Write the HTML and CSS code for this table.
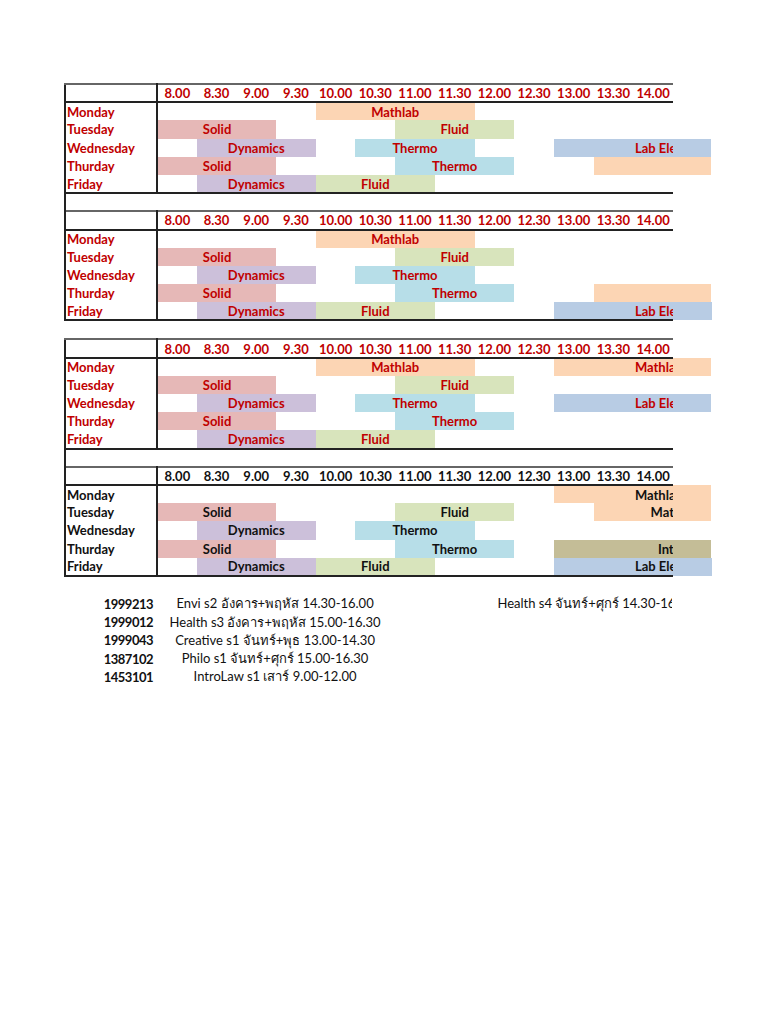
FILE: index.html
```html
<!DOCTYPE html>
<html lang="th">
<head>
    <meta charset="UTF-8">
    <meta name="viewport" content="width=device-width, initial-scale=1.0">
    <title>Timetable</title>
    <link rel="stylesheet" href="styles.css">
</head>
<body>
    <div class="sheet">
        <table class="tt">
            <colgroup><col class="c-day"><col span="13" class="c-t"><col class="c-x"></colgroup>
            <tbody class="red">
                <tr class="head"><th class="day"></th><th>8.00</th><th>8.30</th><th>9.00</th><th>9.30</th><th>10.00</th><th>10.30</th><th>11.00</th><th>11.30</th><th>12.00</th><th>12.30</th><th>13.00</th><th>13.30</th><th>14.00</th><td class="x"></td></tr>
                <tr><td class="day">Monday</td><td colspan="4"></td><td colspan="4" class="pe">Mathlab</td><td colspan="5"></td><td class="x"></td></tr>
                <tr><td class="day">Tuesday</td><td colspan="3" class="so">Solid</td><td colspan="3"></td><td colspan="3" class="fl">Fluid</td><td colspan="4"></td><td class="x"></td></tr>
                <tr><td class="day">Wednesday</td><td></td><td colspan="3" class="dy">Dynamics</td><td></td><td colspan="3" class="th">Thermo</td><td colspan="2"></td><td colspan="3" class="le cut">Lab Electronics</td><td class="x le"></td></tr>
                <tr><td class="day">Thurday</td><td colspan="3" class="so">Solid</td><td colspan="3"></td><td colspan="3" class="th">Thermo</td><td colspan="2"></td><td colspan="2" class="pe"></td><td class="x pe"></td></tr>
                <tr class="last"><td class="day">Friday</td><td></td><td colspan="3" class="dy">Dynamics</td><td colspan="3" class="fl">Fluid</td><td colspan="6"></td><td class="x"></td></tr>
                <tr class="blank"><td class="day"></td><td colspan="13"></td><td class="x"></td></tr>
                <tr class="head"><th class="day"></th><th>8.00</th><th>8.30</th><th>9.00</th><th>9.30</th><th>10.00</th><th>10.30</th><th>11.00</th><th>11.30</th><th>12.00</th><th>12.30</th><th>13.00</th><th>13.30</th><th>14.00</th><td class="x"></td></tr>
                <tr><td class="day">Monday</td><td colspan="4"></td><td colspan="4" class="pe">Mathlab</td><td colspan="5"></td><td class="x"></td></tr>
                <tr><td class="day">Tuesday</td><td colspan="3" class="so">Solid</td><td colspan="3"></td><td colspan="3" class="fl">Fluid</td><td colspan="4"></td><td class="x"></td></tr>
                <tr><td class="day">Wednesday</td><td></td><td colspan="3" class="dy">Dynamics</td><td></td><td colspan="3" class="th">Thermo</td><td colspan="5"></td><td class="x"></td></tr>
                <tr><td class="day">Thurday</td><td colspan="3" class="so">Solid</td><td colspan="3"></td><td colspan="3" class="th">Thermo</td><td colspan="2"></td><td colspan="2" class="pe"></td><td class="x pe"></td></tr>
                <tr class="last"><td class="day">Friday</td><td></td><td colspan="3" class="dy">Dynamics</td><td colspan="3" class="fl">Fluid</td><td colspan="3"></td><td colspan="3" class="le cut">Lab Electronics</td><td class="x le"></td></tr>
            </tbody>
        </table>

        <table class="tt second">
            <colgroup><col class="c-day"><col span="13" class="c-t"><col class="c-x"></colgroup>
            <tbody class="red">
                <tr class="head"><th class="day"></th><th>8.00</th><th>8.30</th><th>9.00</th><th>9.30</th><th>10.00</th><th>10.30</th><th>11.00</th><th>11.30</th><th>12.00</th><th>12.30</th><th>13.00</th><th>13.30</th><th>14.00</th><td class="x"></td></tr>
                <tr><td class="day">Monday</td><td colspan="4"></td><td colspan="4" class="pe">Mathlab</td><td colspan="2"></td><td colspan="3" class="pe cut">Mathlab</td><td class="x pe"></td></tr>
                <tr><td class="day">Tuesday</td><td colspan="3" class="so">Solid</td><td colspan="3"></td><td colspan="3" class="fl">Fluid</td><td colspan="4"></td><td class="x"></td></tr>
                <tr><td class="day">Wednesday</td><td></td><td colspan="3" class="dy">Dynamics</td><td></td><td colspan="3" class="th">Thermo</td><td colspan="2"></td><td colspan="3" class="le cut">Lab Electronics</td><td class="x le"></td></tr>
                <tr><td class="day">Thurday</td><td colspan="3" class="so">Solid</td><td colspan="3"></td><td colspan="3" class="th">Thermo</td><td colspan="4"></td><td class="x"></td></tr>
                <tr class="last"><td class="day">Friday</td><td></td><td colspan="3" class="dy">Dynamics</td><td colspan="3" class="fl">Fluid</td><td colspan="6"></td><td class="x"></td></tr>
                <tr class="blank"><td class="day"></td><td colspan="13"></td><td class="x"></td></tr>
            </tbody>
            <tbody class="ink">
                <tr class="head"><th class="day"></th><th>8.00</th><th>8.30</th><th>9.00</th><th>9.30</th><th>10.00</th><th>10.30</th><th>11.00</th><th>11.30</th><th>12.00</th><th>12.30</th><th>13.00</th><th>13.30</th><th>14.00</th><td class="x"></td></tr>
                <tr><td class="day">Monday</td><td colspan="10"></td><td colspan="3" class="pe cut">Mathlab</td><td class="x pe"></td></tr>
                <tr><td class="day">Tuesday</td><td colspan="3" class="so">Solid</td><td colspan="3"></td><td colspan="3" class="fl">Fluid</td><td colspan="2"></td><td colspan="2" class="pe cut-mat">Mathlab</td><td class="x pe"></td></tr>
                <tr><td class="day">Wednesday</td><td></td><td colspan="3" class="dy">Dynamics</td><td></td><td colspan="3" class="th">Thermo</td><td colspan="5"></td><td class="x"></td></tr>
                <tr><td class="day">Thurday</td><td colspan="3" class="so">Solid</td><td colspan="3"></td><td colspan="3" class="th">Thermo</td><td></td><td colspan="3" class="kh cut-ini">Intro</td><td class="x kh"></td></tr>
                <tr class="last"><td class="day">Friday</td><td></td><td colspan="3" class="dy">Dynamics</td><td colspan="3" class="fl">Fluid</td><td colspan="3"></td><td colspan="3" class="le cut">Lab Electronics</td><td class="x le"></td></tr>
            </tbody>
        </table>

        <div class="courses">
            <div class="code">1999213</div><div class="course">Envi s2 อังคาร+พฤหัส 14.30-16.00</div><div class="course-far">Health s4 จันทร์+ศุกร์ 14.30-16.30</div>
            <div class="code">1999012</div><div class="course">Health s3 อังคาร+พฤหัส 15.00-16.30</div>
            <div class="code">1999043</div><div class="course">Creative s1 จันทร์+พุธ 13.00-14.30</div>
            <div class="code">1387102</div><div class="course">Philo s1 จันทร์+ศุกร์ 15.00-16.30</div>
            <div class="code">1453101</div><div class="course">IntroLaw s1 เสาร์ 9.00-12.00</div>
        </div>
    </div>
</body>
</html>
```

FILE: styles.css
```css
body {
    margin: 0;
    background: #fff;
    font-family: "Lato", "Noto Sans", "DejaVu Sans", sans-serif;
}
.sheet {
    padding: 83px 0 0 64px;
}
.tt {
    border-collapse: collapse;
    table-layout: fixed;
    width: 647px;
    font-size: 13px;
    font-weight: 700;
}
.second {
    margin-top: 17px;
}
.c-day { width: 92px; }
.c-t { width: 39.69px; }
.c-x { width: 39px; }
.tt tr {
    height: 18.2px;
}
.tt td,
.tt th {
    padding: 1px 1px 0;
    line-height: 13px;
    text-align: center;
    vertical-align: middle;
    white-space: nowrap;
    overflow: hidden;
    font-weight: 700;
}
.red { color: #c00000; }
.ink { color: #111; }
.tt .day {
    text-align: left;
    border-left: 2px solid #222;
    border-right: 2px solid #222;
}
.tt .blank .day {
    border-right: none;
}
.head th {
    border-top: 2px solid #666;
    border-bottom: 2px solid #222;
}
.last td {
    border-bottom: 2px solid #222;
}
.last .x {
    border-bottom: none;
}

/* cell fills */
.so { background: #e6b8b7; }
.dy { background: #ccc0da; }
.pe { background: #fcd5b4; }
.fl { background: #d8e4bc; }
.th { background: #b7dee8; }
.le { background: #b8cce4; }
.kh { background: #c4bd97; }

/* labels that run off the print area */
.tt .cut { text-align: left; padding-left: 81px; }
.tt .cut-mat { text-align: left; padding-left: 57px; }
.tt .cut-ini { text-align: left; padding-left: 104px; }

.courses {
    display: grid;
    grid-template-columns: 91px repeat(13, 39.69px);
    grid-auto-rows: 18.2px;
    align-items: center;
    margin: 18px 0 0 1px;
    font-size: 13px;
    color: #111;
}
.code {
    grid-column: 1;
    text-align: right;
    padding-right: 3px;
    font-weight: 700;
    letter-spacing: -0.5px;
}
.course {
    grid-column: 3 / 7;
    display: flex;
    justify-content: center;
    white-space: nowrap;
}
.course-far {
    grid-column: 10 / 15;
    padding-left: 24px;
    white-space: nowrap;
    overflow: hidden;
}
```
